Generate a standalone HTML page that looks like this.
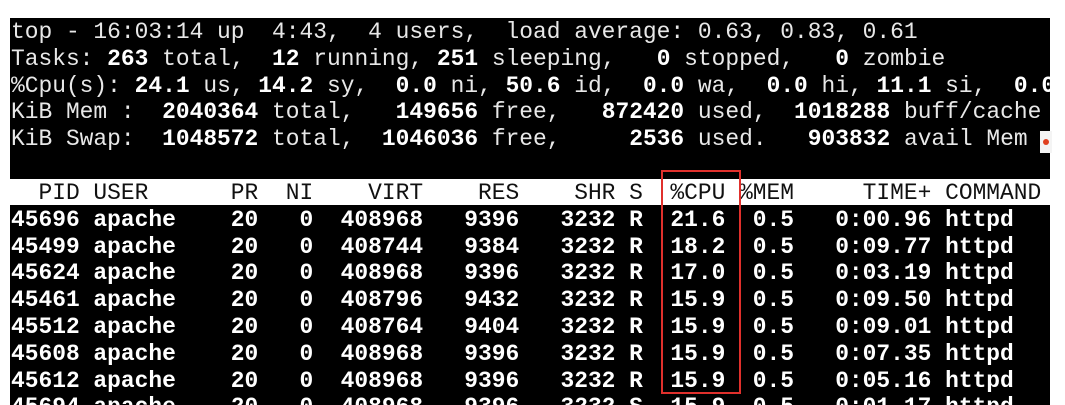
<!DOCTYPE html>
<html><head><meta charset="utf-8"><style>
html,body{margin:0;padding:0;background:#fff;width:1065px;height:405px;overflow:hidden}
#t{position:absolute;left:10px;top:18px;width:1040px;height:387px;background:#000;overflow:hidden}
pre{margin:0;position:absolute;left:1px;top:1px;font-family:"Liberation Mono",monospace;font-size:22.9px;line-height:26.8px;color:#e8e8e8;white-space:pre}
b{color:#fff}
.h{position:absolute;left:0;top:161px;width:1040px;height:26px;background:#fff}
.hl{color:#111}
.d{font-weight:bold;color:#fff}
#box{position:absolute;left:661px;top:170px;width:76px;height:220px;border:2px solid #e0302c}
#ic{position:absolute;left:1040px;top:131px;width:12px;height:22px;background:#f4f4f4}
#ic:after{content:"";position:absolute;left:3px;top:8px;width:6px;height:6px;background:#e04020;border-radius:50%}
</style></head><body>
<div id="t">
<pre>top - 16:03:14 up  4:43,  4 users,  load average: 0.63, 0.83, 0.61
Tasks: <b>263</b> total,  <b>12</b> running, <b>251</b> sleeping,   <b>0</b> stopped,   <b>0</b> zombie
%Cpu(s): <b>24.1</b> us, <b>14.2</b> sy,  <b>0.0</b> ni, <b>50.6</b> id,  <b>0.0</b> wa,  <b>0.0</b> hi, <b>11.1</b> si,  <b>0.0</b> st
KiB Mem :  <b>2040364</b> total,   <b>149656</b> free,   <b>872420</b> used,  <b>1018288</b> buff/cache
KiB Swap:  <b>1048572</b> total,  <b>1046036</b> free,     <b>2536</b> used.   <b>903832</b> avail Mem
</pre>
<div class="h"></div>
<pre style="top:162px"><span class="hl">  PID USER      PR  NI    VIRT    RES    SHR S  %CPU %MEM     TIME+ COMMAND</span>
<span class="d">45696 apache    20   0  408968   9396   3232 R  21.6  0.5   0:00.96 httpd
45499 apache    20   0  408744   9384   3232 R  18.2  0.5   0:09.77 httpd
45624 apache    20   0  408968   9396   3232 R  17.0  0.5   0:03.19 httpd
45461 apache    20   0  408796   9432   3232 R  15.9  0.5   0:09.50 httpd
45512 apache    20   0  408764   9404   3232 R  15.9  0.5   0:09.01 httpd
45608 apache    20   0  408968   9396   3232 R  15.9  0.5   0:07.35 httpd
45612 apache    20   0  408968   9396   3232 R  15.9  0.5   0:05.16 httpd
45694 apache    20   0  408968   9396   3232 S  15.9  0.5   0:01.17 httpd</span></pre>
</div>
<div id="ic"></div>
<div id="box"></div>
</body></html>
